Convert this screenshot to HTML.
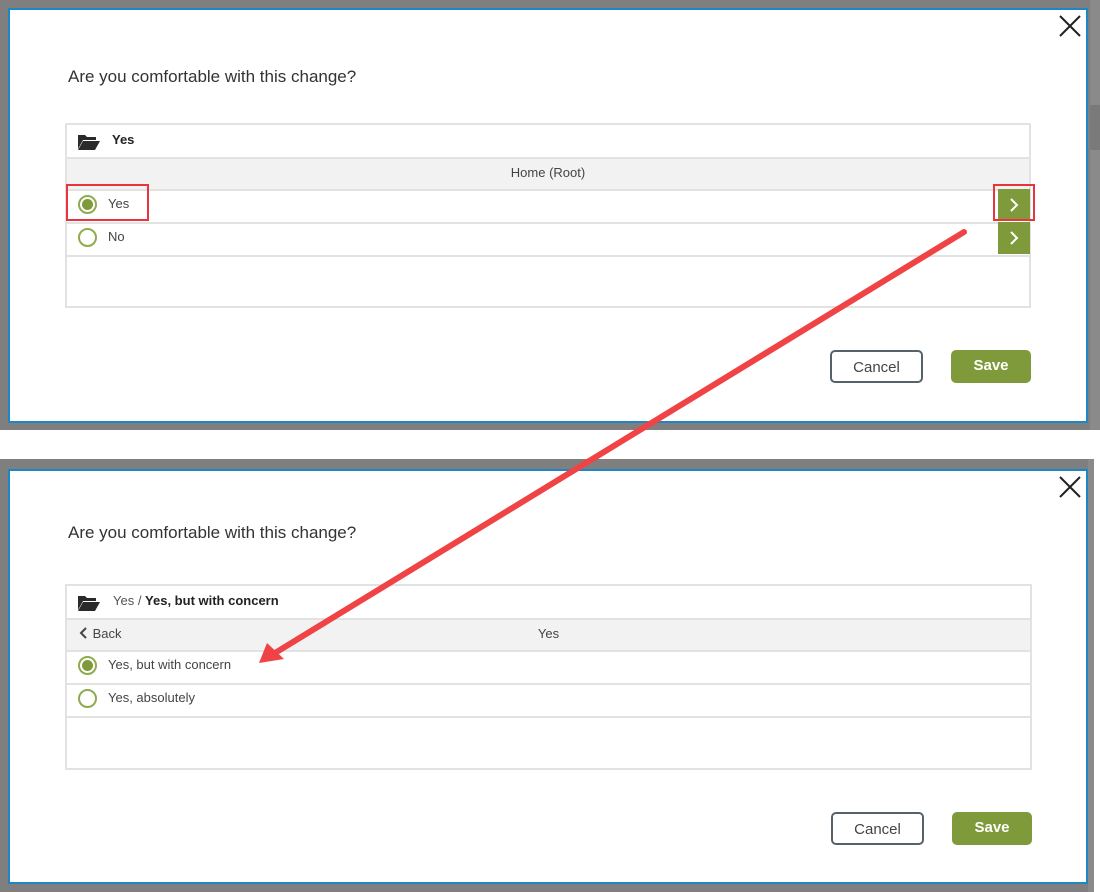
<!DOCTYPE html>
<html><head><meta charset="utf-8"><style>
*{box-sizing:border-box;margin:0;padding:0}
body{width:1100px;height:892px;position:relative;background:#fff;font-family:"Liberation Sans",sans-serif;overflow:hidden;color:#444}
.abs{position:absolute}
.gray{background:#7f7f7f}
.modal{background:#fff;border:2px solid #1e86c4}
.title{font-size:17px;color:#333}
.tbl{border:2px solid #e2e2e2;background:#fff}
.row{position:absolute;left:0;right:0;border-bottom:2px solid #e2e2e2;font-size:13px;color:#444}
.radio{position:absolute;left:11px;width:19px;height:19px;border:2px solid #8fab4e;border-radius:50%;background:#fff}
.radio.on::after{content:"";position:absolute;left:2px;top:2px;width:11px;height:11px;border-radius:50%;background:#7f9a3b}
.lbl{position:absolute;left:41px}
.gbtn{position:absolute;width:32px;height:32px;background:#7f9a3b;color:#fff}
.btn{position:absolute;height:33px;border-radius:5px;font-size:15px;text-align:center;line-height:31px}
.cancel{border:2px solid #56626a;color:#444;background:#fff}
.save{background:#7f9a3b;color:#fff;font-weight:bold;line-height:32px}
.redbox{position:absolute;border:2px solid #e8343c}
</style></head><body>
<div class="abs gray" style="left:0;top:0;width:1100px;height:430px"></div>
<div class="abs" style="left:1090px;top:0;width:10px;height:430px;background:#8a8a8a"></div>
<div class="abs" style="left:1090px;top:105px;width:10px;height:45px;background:#7a7a7a"></div>
<div class="abs modal" style="left:8px;top:8px;width:1080px;height:415px"></div>
<svg class="abs" style="left:1058px;top:14px" width="24" height="24"><path d="M2 2L22 22M22 2L2 22" stroke="#222" stroke-width="2"/></svg>
<div class="abs title" style="left:68px;top:67px">Are you comfortable with this change?</div>
<div class="abs tbl" style="left:65px;top:123px;width:966px;height:185px">
  <div class="row" style="top:0;height:34px">
    <svg class="abs" style="left:10px;top:8px" width="24" height="18" viewBox="0 0 24 18"><path d="M1 2h7l2 2h9v3H6L1 16z" fill="#2a2a2a"/><path d="M6 8h17l-5 9H1z" fill="#2a2a2a"/></svg>
    <span class="abs" style="left:45px;top:7px;font-weight:bold;color:#222">Yes</span>
  </div>
  <div class="row" style="top:34px;height:32px;background:#f2f2f2;text-align:center;line-height:28px">Home (Root)</div>
  <div class="row" style="top:66px;height:33px"><div class="radio on" style="top:4px"></div><span class="lbl" style="top:5px">Yes</span></div>
  <div class="row" style="top:99px;height:33px"><div class="radio" style="top:4px"></div><span class="lbl" style="top:5px">No</span></div>
</div>
<div class="gbtn" style="left:998px;top:189px"><svg width="32" height="32"><path d="M13 10l6 6-6 6" stroke="#fff" stroke-width="2" fill="none"/></svg></div>
<div class="gbtn" style="left:998px;top:222px"><svg width="32" height="32"><path d="M13 10l6 6-6 6" stroke="#fff" stroke-width="2" fill="none"/></svg></div>
<div class="redbox" style="left:66px;top:184px;width:83px;height:37px"></div>
<div class="redbox" style="left:993px;top:184px;width:42px;height:37px"></div>
<div class="btn cancel" style="left:830px;top:350px;width:93px">Cancel</div>
<div class="btn save" style="left:951px;top:350px;width:80px">Save</div>

<div class="abs gray" style="left:0;top:459px;width:1094px;height:433px"></div>
<div class="abs" style="left:1088px;top:459px;width:6px;height:433px;background:#8a8a8a"></div>
<div class="abs modal" style="left:8px;top:469px;width:1080px;height:415px"></div>
<svg class="abs" style="left:1058px;top:475px" width="24" height="24"><path d="M2 2L22 22M22 2L2 22" stroke="#222" stroke-width="2"/></svg>
<div class="abs title" style="left:68px;top:523px">Are you comfortable with this change?</div>
<div class="abs tbl" style="left:65px;top:584px;width:967px;height:186px">
  <div class="row" style="top:0;height:34px">
    <svg class="abs" style="left:10px;top:8px" width="24" height="18" viewBox="0 0 24 18"><path d="M1 2h7l2 2h9v3H6L1 16z" fill="#2a2a2a"/><path d="M6 8h17l-5 9H1z" fill="#2a2a2a"/></svg>
    <span class="abs" style="left:46px;top:7px;color:#555">Yes / <b style="color:#222">Yes, but with concern</b></span>
  </div>
  <div class="row" style="top:34px;height:32px;background:#f2f2f2;text-align:center;line-height:28px">Yes
    <span class="abs" style="left:12px;top:0;line-height:28px"><svg width="10" height="12" style="vertical-align:-1px"><path d="M7 1L2 6l5 5" stroke="#444" stroke-width="2" fill="none"/></svg> Back</span></div>
  <div class="row" style="top:66px;height:33px"><div class="radio on" style="top:4px"></div><span class="lbl" style="top:5px">Yes, but with concern</span></div>
  <div class="row" style="top:99px;height:33px"><div class="radio" style="top:4px"></div><span class="lbl" style="top:5px">Yes, absolutely</span></div>
</div>
<div class="btn cancel" style="left:831px;top:812px;width:93px">Cancel</div>
<div class="btn save" style="left:952px;top:812px;width:80px">Save</div>

<svg class="abs" style="left:0;top:0" width="1100" height="892">
  <line x1="964" y1="232" x2="275" y2="653" stroke="#f04346" stroke-width="6" stroke-linecap="round"/>
  <polygon points="259,663 267,643 284,659" fill="#f04346"/>
</svg>
</body></html>
